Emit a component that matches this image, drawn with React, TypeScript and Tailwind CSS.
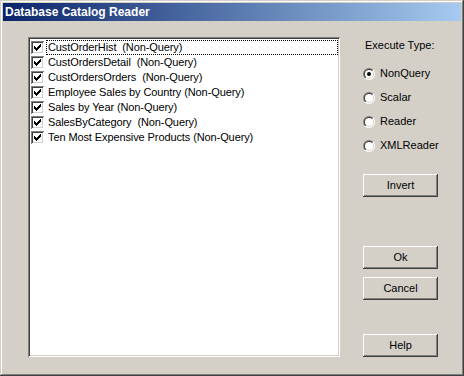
import React from "react";

const items = [
  "CustOrderHist  (Non-Query)",
  "CustOrdersDetail  (Non-Query)",
  "CustOrdersOrders  (Non-Query)",
  "Employee Sales by Country (Non-Query)",
  "Sales by Year (Non-Query)",
  "SalesByCategory  (Non-Query)",
  "Ten Most Expensive Products (Non-Query)",
];

function Check() {
  const cols: [number, number][] = [
    [3, 5],
    [4, 6],
    [5, 7],
    [6, 6],
    [7, 5],
    [8, 4],
    [9, 3],
  ];
  return (
    <svg width="13" height="13" viewBox="0 0 13 13" className="block shrink-0" shapeRendering="crispEdges">
      <rect x="0" y="0" width="13" height="13" fill="#808080" />
      <rect x="1" y="1" width="12" height="12" fill="#ffffff" />
      <rect x="1" y="1" width="11" height="11" fill="#404040" />
      <rect x="2" y="2" width="10" height="10" fill="#d4d0c8" />
      <rect x="2" y="2" width="9" height="9" fill="#ffffff" />
      {cols.map(([x, y]) => (
        <rect key={x} x={x} y={y} width="1" height="3" fill="#000" />
      ))}
    </svg>
  );
}

function Radio({ on, id }: { on?: boolean; id: string }) {
  return (
    <svg width="12" height="12" viewBox="0 0 12 12" className="block shrink-0">
      <defs>
        <linearGradient id={id + "a"} x1="0" y1="0" x2="1" y2="1">
          <stop offset="0.5" stopColor="#808080" />
          <stop offset="0.5" stopColor="#ffffff" />
        </linearGradient>
        <linearGradient id={id + "b"} x1="0" y1="0" x2="1" y2="1">
          <stop offset="0.5" stopColor="#404040" />
          <stop offset="0.5" stopColor="#d4d0c8" />
        </linearGradient>
      </defs>
      <circle cx="6" cy="6" r="6" fill={`url(#${id}a)`} />
      <circle cx="6" cy="6" r="5" fill={`url(#${id}b)`} />
      <circle cx="6" cy="6" r="4" fill="#ffffff" />
      {on && <circle cx="6" cy="6" r="2" fill="#000" />}
    </svg>
  );
}

function Btn({ label, className }: { label: string; className?: string }) {
  return (
    <div
      className={
        "w-[75px] h-[23px] flex items-center justify-center bg-[#d4d0c8] text-black text-[11px] shadow-[inset_-1px_-1px_#404040,inset_1px_1px_#ffffff,inset_-2px_-2px_#808080,inset_2px_2px_#d4d0c8] " +
        (className ?? "")
      }
    >
      {label}
    </div>
  );
}

export default function App() {
  return (
    <div
      className="w-[464px] h-[376px] bg-[#d4d0c8] p-[3px] flex flex-col shadow-[inset_-1px_-1px_#404040,inset_1px_1px_#d4d0c8,inset_-2px_-2px_#808080,inset_2px_2px_#ffffff]"
      style={{ fontFamily: '"Liberation Sans", Arial, sans-serif' }}
    >
      <div className="h-[18px] shrink-0 flex items-center pl-[2px] bg-[linear-gradient(to_right,#0a246a,#a6caf0)]">
        <span className="text-white font-bold text-[12px] leading-none">Database Catalog Reader</span>
      </div>
      <div className="flex flex-row pl-[25px] pt-[16px]">
        <div className="w-[312px] h-[320px] bg-white p-[2px] shadow-[inset_1px_1px_#808080,inset_-1px_-1px_#ffffff,inset_2px_2px_#404040,inset_-2px_-2px_#d4d0c8]">
          <div className="pt-[1px] flex flex-col">
            {items.map((t, i) => (
              <div key={t} className="h-[15px] flex items-center pl-[1px]">
                <Check />
                <div
                  className={
                    "ml-[2px] flex-1 h-[15px] flex items-center pl-[1px] text-[11px] tracking-[-0.1px] text-black whitespace-pre " +
                    (i === 0 ? "border border-dotted border-black" : "border border-transparent")
                  }
                >
                  {t}
                </div>
              </div>
            ))}
          </div>
        </div>
        <div className="ml-[23px] w-[75px] flex flex-col text-[11px] text-black">
          <div className="h-[15px] leading-[15px] mt-[1px] pl-[2px] whitespace-nowrap">Execute Type:</div>
          <div className="mt-[13px] flex flex-col gap-[9px]">
            {["NonQuery", "Scalar", "Reader", "XMLReader"].map((r, i) => (
              <div key={r} className="h-[15px] flex items-center">
                <Radio on={i === 0} id={"r" + i} />
                <span className="ml-[5px] leading-[15px]">{r}</span>
              </div>
            ))}
          </div>
          <Btn label="Invert" className="mt-[21px]" />
          <Btn label="Ok" className="mt-[49px]" />
          <Btn label="Cancel" className="mt-[8px]" />
          <Btn label="Help" className="mt-[34px]" />
        </div>
      </div>
    </div>
  );
}
